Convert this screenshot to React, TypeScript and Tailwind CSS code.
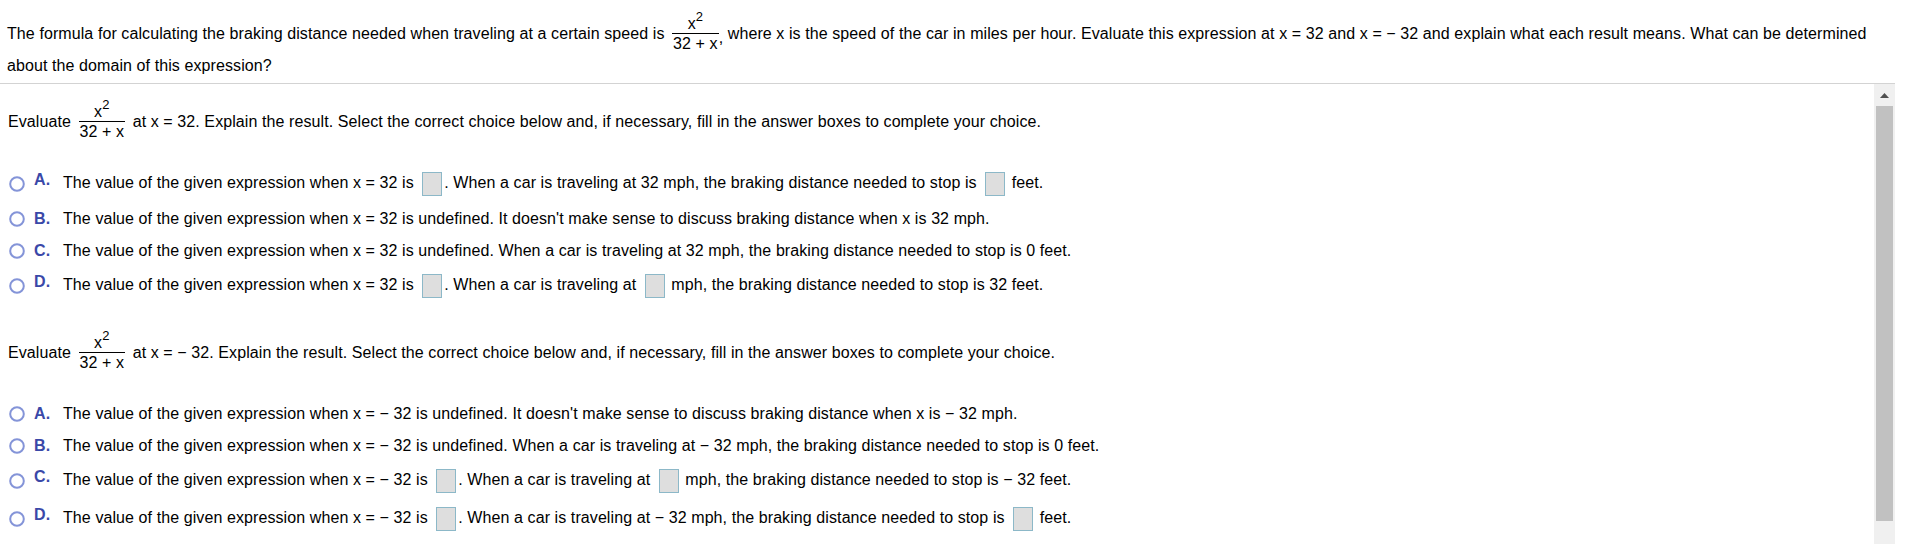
import type { ReactNode } from "react";

// x² over (32 + x), the fraction used in the prompt and both "Evaluate" lines
function Frac({ className = "" }: { className?: string }) {
  return (
    <span className={`inline-flex flex-col items-center align-middle ${className}`}>
      <span className="leading-[18px]">
        x<span className="relative -top-[8px] text-[13px] leading-none">2</span>
      </span>
      <span className="h-px w-full bg-black" />
      <span className="px-[1px] leading-[20px]">32 + x</span>
    </span>
  );
}

function Box() {
  return (
    <span className="ml-[4px] mr-[2px] inline-block h-[24px] w-[20px] border border-[#8cb8c8] bg-[#dedede] align-middle" />
  );
}

function Radio() {
  return (
    <svg width="16" height="16" viewBox="0 0 16 16" className="shrink-0" aria-hidden="true">
      <circle cx="8" cy="8" r="6.8" fill="#fff" stroke="#8494d8" strokeWidth="2" />
    </svg>
  );
}

type Choice = { letter: string; boxed?: boolean; text: ReactNode };

function Choices({ items, className = "" }: { items: Choice[]; className?: string }) {
  return (
    <div className={`flex flex-col gap-[12px] ${className}`}>
      {items.map((c) => (
        <div
          key={c.letter}
          className={`flex items-center pl-[9px] ${c.boxed ? "h-[26px]" : "h-[20px]"}`}
        >
          <Radio />
          <span
            className={`ml-[9px] w-[29px] shrink-0 font-bold leading-[20px] text-[#3a48a8] ${
              c.boxed ? "relative -top-[4px]" : ""
            }`}
          >
            {c.letter}.
          </span>
          <span className="whitespace-nowrap leading-[20px]">{c.text}</span>
        </div>
      ))}
    </div>
  );
}

const PART_ONE: Choice[] = [
  {
    letter: "A",
    boxed: true,
    text: (
      <>
        The value of the given expression when x = 32 is <Box />. When a car is traveling at 32 mph,
        the braking distance needed to stop is <Box /> feet.
      </>
    ),
  },
  {
    letter: "B",
    text: "The value of the given expression when x = 32 is undefined. It doesn't make sense to discuss braking distance when x is 32 mph.",
  },
  {
    letter: "C",
    text: "The value of the given expression when x = 32 is undefined. When a car is traveling at 32 mph, the braking distance needed to stop is 0 feet.",
  },
  {
    letter: "D",
    boxed: true,
    text: (
      <>
        The value of the given expression when x = 32 is <Box />. When a car is traveling at <Box />{" "}
        mph, the braking distance needed to stop is 32 feet.
      </>
    ),
  },
];

const PART_TWO: Choice[] = [
  {
    letter: "A",
    text: "The value of the given expression when x = − 32 is undefined. It doesn't make sense to discuss braking distance when x is  − 32 mph.",
  },
  {
    letter: "B",
    text: "The value of the given expression when x = − 32 is undefined. When a car is traveling at  − 32 mph, the braking distance needed to stop is 0 feet.",
  },
  {
    letter: "C",
    boxed: true,
    text: (
      <>
        The value of the given expression when x = − 32 is <Box />. When a car is traveling at <Box />{" "}
        mph, the braking distance needed to stop is  − 32 feet.
      </>
    ),
  },
  {
    letter: "D",
    boxed: true,
    text: (
      <>
        The value of the given expression when x = − 32 is <Box />. When a car is traveling at  − 32
        mph, the braking distance needed to stop is <Box /> feet.
      </>
    ),
  },
];

function Evaluate({ at }: { at: string }) {
  return (
    <p className="whitespace-nowrap pl-[8px] leading-[20px]">
      Evaluate <Frac className="mx-[3px]" /> at x = {at}. Explain the result. Select the correct
      choice below and, if necessary, fill in the answer boxes to complete your choice.
    </p>
  );
}

export default function App() {
  return (
    <div className="h-[544px] w-[1907px] overflow-hidden bg-white font-['Liberation_Sans',Arial,sans-serif] text-[16px] tracking-[0.09px] text-black">
      <div className="w-[1895px]">
        <p className="border-b border-[#d3d3d3] pb-[5px] pl-[7px] pt-[15px] leading-[24px]">
          The formula for calculating the braking distance needed when traveling at a certain speed
          is <Frac className="ml-[3px]" />
          <span className="relative top-[4px]">,</span> where x is the speed of the car in miles per
          hour. Evaluate this expression at x = 32 and x = − 32 and explain what each result means.
          What can be determined about the domain of this expression?
        </p>

        <div className="flex h-[460px]">
          <div className="flex-1 pt-[19px]">
            <Evaluate at="32" />
            <Choices items={PART_ONE} className="mt-[29px]" />

            <div className="mt-[35px]">
              <Evaluate at="− 32" />
              <Choices items={PART_TWO} className="mt-[31px]" />
            </div>
          </div>

          {/* scrollbar of the answer pane */}
          <div className="flex w-[21px] flex-col items-center bg-[#f0f0f0]">
            <div className="flex h-[22px] items-center">
              <svg width="9" height="5" viewBox="0 0 9 5" aria-hidden="true">
                <path d="M4.5 0L9 5H0z" fill="#505050" />
              </svg>
            </div>
            <div className="h-[415px] w-[17px] bg-[#c1c1c1]" />
          </div>
        </div>
      </div>
    </div>
  );
}
